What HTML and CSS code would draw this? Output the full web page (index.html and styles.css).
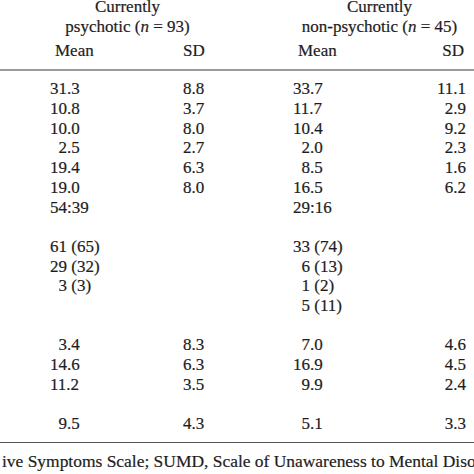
FILE: index.html
```html
<!DOCTYPE html>
<html>
<head>
<meta charset="utf-8">
<link rel="stylesheet" href="styles.css">
</head>
<body>
<div class="page">
  <div class="head">
    <div class="grp grp-left">
      <div class="hline">Currently</div>
      <div class="hline">psychotic (<i>n</i> = 93)</div>
    </div>
    <div class="grp grp-right">
      <div class="hline">Currently</div>
      <div class="hline">non-psychotic (<i>n</i> = 45)</div>
    </div>
  </div>
  <div class="grid sub">
    <div class="mean">Mean</div><div>SD</div><div class="mean">Mean</div><div class="r sd-r">SD</div>
  </div>
  <div class="rule-top"></div>
  <div class="grid body">
    <div>31.3</div><div>8.8</div><div>33.7</div><div class="r">11.1</div>
    <div>10.8</div><div>3.7</div><div>11.7</div><div class="r">2.9</div>
    <div>10.0</div><div>8.0</div><div>10.4</div><div class="r">9.2</div>
    <div class="p1">2.5</div><div>2.7</div><div class="p1">2.0</div><div class="r">2.3</div>
    <div>19.4</div><div>6.3</div><div class="p1">8.5</div><div class="r">1.6</div>
    <div>19.0</div><div>8.0</div><div>16.5</div><div class="r">6.2</div>
    <div>54:39</div><div></div><div>29:16</div><div class="r"></div>
    <div class="blank"></div><div></div><div></div><div></div>
    <div>61 (65)</div><div></div><div>33 (74)</div><div class="r"></div>
    <div>29 (32)</div><div></div><div class="p1">6 (13)</div><div class="r"></div>
    <div class="p1">3 (3)</div><div></div><div class="p1">1 (2)</div><div class="r"></div>
    <div class="blank"></div><div></div><div class="p1">5 (11)</div><div class="r"></div>
    <div class="blank"></div><div></div><div></div><div></div>
    <div class="p1">3.4</div><div>8.3</div><div class="p1">7.0</div><div class="r">4.6</div>
    <div>14.6</div><div>6.3</div><div>16.9</div><div class="r">4.5</div>
    <div>11.2</div><div>3.5</div><div class="p1">9.9</div><div class="r">2.4</div>
    <div class="blank"></div><div></div><div></div><div></div>
    <div class="p1">9.5</div><div>4.3</div><div class="p1">5.1</div><div class="r">3.3</div>
  </div>
  <div class="rule-bot"></div>
  <p class="foot">ive Symptoms Scale; SUMD, Scale of Unawareness to Mental Disorder</p>
</div>
</body>
</html>
```

FILE: styles.css
```css
html, body {
  margin: 0;
  padding: 0;
  background: #ffffff;
}
.page {
  width: 474px;
  height: 474px;
  overflow: hidden;
  font-family: "Liberation Serif", "Times New Roman", serif;
  font-size: 17px;
  color: #1e1c1d;
  -webkit-text-stroke: 0.2px #1e1c1d;
}
.head {
  display: flex;
  gap: 88px;
  padding-left: 50px;
  margin-top: -3.5px;
}
.grp {
  text-align: center;
}
.grp-left { width: 155px; }
.grp-right { width: 173px; }
.hline {
  line-height: 20px;
  height: 20px;
  white-space: nowrap;
}
.grid {
  display: grid;
  grid-template-columns: 133px 110px 140px 33px;
  padding-left: 50px;
  white-space: pre;
}
.sub {
  margin-top: 4.5px;
  line-height: 20px;
}
.mean {
  padding-left: 5px;
}
.sd-r {
  padding-right: 2px;
}
.body {
  margin-top: 8.4px;
  line-height: 19.7px;
  grid-auto-rows: 19.7px;
}
.r {
  text-align: right;
}
.p1 {
  padding-left: 0.5em;
}
.rule-top {
  margin-top: 8px;
  height: 2px;
  background: #9a9a9a;
}
.rule-bot {
  margin-top: 8.5px;
  height: 1px;
  background: #555555;
}
.foot {
  margin: 7.5px 0 0 2px;
  line-height: 20px;
  font-size: 17.45px;
  white-space: nowrap;
}
```
